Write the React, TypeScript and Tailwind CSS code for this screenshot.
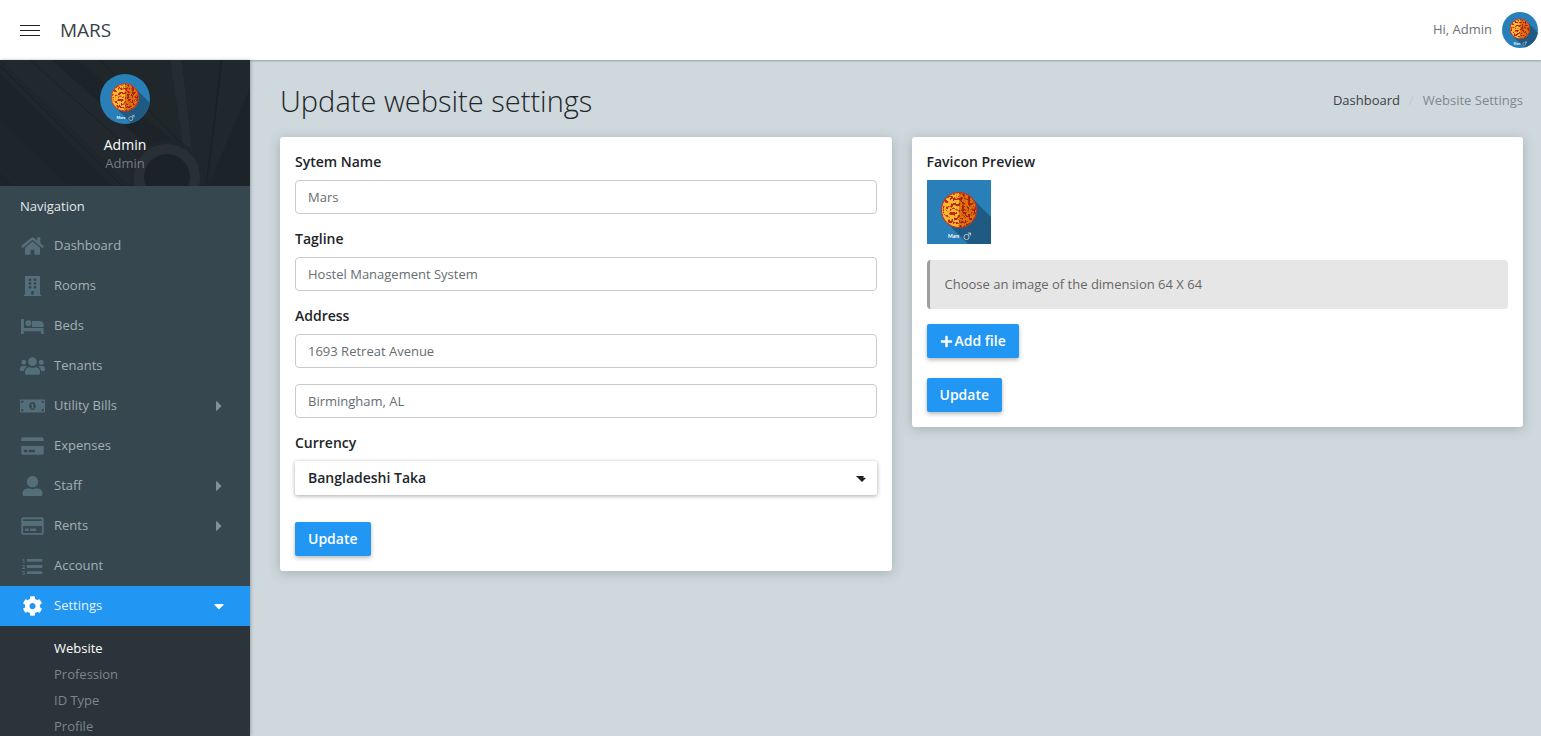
import { useId } from 'react';
import type { ComponentType, ReactNode } from 'react';
import {
  FaBuilding,
  FaCaretDown,
  FaCaretRight,
  FaCog,
  FaCreditCard,
  FaHome,
  FaPlus,
  FaRegCreditCard,
  FaUserAlt,
  FaUsers,
} from 'react-icons/fa';

type IconProps = { className?: string };
type NavItem = { icon: ComponentType<IconProps>; label: string; hasChildren?: boolean };

function BedIcon({ className }: IconProps) {
  return (
    <svg viewBox="0 0 25 20" fill="currentColor" className={className} aria-hidden="true">
      <path d="M1.6 3h1.7q.6 0 .6.6V12h19.2q.6 0 .6.6v4.8q0 .6-.6.6h-1.6q-.6 0-.6-.6V15.300H3.900v2.100q0 .6-.6.6H1.600q-.6 0-.6-.6V3.600q0-.6.6-.6Z" />
      <circle cx="8.4" cy="7.3" r="3" />
      <path d="M12.600 5h7q4.100 0 4.100 4v2H12V5.600q0-.6.6-.6Z" />
    </svg>
  );
}

function BillIcon({ className }: IconProps) {
  return (
    <svg viewBox="0 0 25 20" fill="currentColor" className={className} aria-hidden="true">
      <path
        fillRule="evenodd"
        d="M.8 3.500h23.400q.8 0 .8.8v11.400q0 .8-.8.8H.8q-.8 0-.8-.8V4.300q0-.8.8-.8ZM1.300 4.800v2.400q2.200 0 2.400-2.400Zm20 0q.2 2.400 2.400 2.400V4.800ZM1.300 12.800v2.400h2.400q-.2-2.400-2.400-2.400Zm22.400 0q-2.200 0-2.400 2.400h2.400ZM12.500 6C10.500 6 9.200 7.800 9.200 10s1.300 4 3.300 4 3.300-1.800 3.300-4-1.300-4-3.300-4Z"
      />
      <path d="M12 7.700h1.200v3.700h.8v1h-2.900v-1h.8V9.100h-.8v-.9Z" />
    </svg>
  );
}

function ListIcon({ className }: IconProps) {
  return (
    <svg viewBox="0 0 25 20" fill="currentColor" className={className} aria-hidden="true">
      <rect x="6.800" y="3" width="15.500" height="2.800" rx=".5" />
      <rect x="6.800" y="9.100" width="15.500" height="2.800" rx=".5" />
      <rect x="6.800" y="15.200" width="15.500" height="2.800" rx=".5" />
      <g fontSize="6" fontWeight="700" fontFamily="Open Sans, sans-serif">
        <text x="1.800" y="6.500">
          1
        </text>
        <text x="1.800" y="12.600">
          2
        </text>
        <text x="1.800" y="18.700">
          3
        </text>
      </g>
    </svg>
  );
}

const navItems: NavItem[] = [
  { icon: FaHome, label: 'Dashboard' },
  { icon: FaBuilding, label: 'Rooms' },
  { icon: BedIcon, label: 'Beds' },
  { icon: FaUsers, label: 'Tenants' },
  { icon: BillIcon, label: 'Utility Bills', hasChildren: true },
  { icon: FaCreditCard, label: 'Expenses' },
  { icon: FaUserAlt, label: 'Staff', hasChildren: true },
  { icon: FaRegCreditCard, label: 'Rents', hasChildren: true },
  { icon: ListIcon, label: 'Account' },
];

const settingsItems = ['Website', 'Profession', 'ID Type', 'Profile'];

function MarsLogo({ className }: { className: string }) {
  const id = useId();
  return (
    <svg viewBox="0 0 64 64" className={className} role="img" aria-label="Mars">
      <defs>
        <clipPath id={`${id}-planet`}>
          <circle cx="32" cy="30" r="17.5" />
        </clipPath>
        <filter id={`${id}-spots`} x="0" y="0" width="100%" height="100%" colorInterpolationFilters="sRGB">
          <feTurbulence type="fractalNoise" baseFrequency="0.34" numOctaves="2" seed="5" result="noise" />
          <feColorMatrix
            in="noise"
            type="matrix"
            values="0 0 0 0 0.72  0 0 0 0 0.16  0 0 0 0 0.08  10 0 0 0 -5"
          />
        </filter>
      </defs>
      <rect width="64" height="64" fill="#2980b9" />
      <path d="M44.5 17.5 64 37v27H41L19.5 42.5Z" fill="#1f5a83" />
      <circle cx="32" cy="30" r="18" fill="#c0392b" />
      <g clipPath={`url(#${id}-planet)`}>
        <rect x="14" y="12" width="18" height="36" fill="#fdb833" />
        <rect x="32" y="12" width="18" height="36" fill="#fb950f" />
        <rect x="14" y="12" width="36" height="36" filter={`url(#${id}-spots)`} />
        <rect x="32" y="12" width="18" height="36" fill="#7a0d08" opacity="0.25" />
      </g>
      <circle cx="32" cy="30" r="17.5" fill="none" stroke="#b8342a" />
      <text x="21" y="58" fontSize="5" fontWeight="700" fill="#fff" fontFamily="Lato, sans-serif">
        Mars
      </text>
      <g fill="none" stroke="#b9c0c4" strokeWidth="1">
        <circle cx="39.5" cy="57" r="2.6" />
        <path d="m41.4 55.1 2-2M41 53h2.6v2.6" />
      </g>
    </svg>
  );
}

function SidebarPattern() {
  return (
    <svg
      viewBox="0 0 250 126"
      preserveAspectRatio="xMidYMid slice"
      className="absolute inset-0 size-full"
      aria-hidden="true"
    >
      <rect width="250" height="126" fill="#1c2429" />
      <path d="M0 0h52l140 126H130Z" fill="#22292e" />
      <path d="M0 0v14l112 112h18Z" fill="#1f272c" />
      <path d="M0 60v52l14 14h56Z" fill="#1e262b" />
      <path d="M78 0h92l24 100Z" fill="#1f272b" />
      <path d="M170 0h12l14 126h-6Z" fill="#262d32" />
      <path d="M182 0h38l-12 126h-12Z" fill="#1e272b" />
      <path d="M222 0h28v28l-42 98Z" fill="#1f282c" />
      <g fill="none" stroke="#1a2126" strokeWidth="1">
        <path d="M0 6 122 126M30 0l142 126M100 0l96 98M222 0l-16 126" />
      </g>
      <circle cx="167" cy="117" r="37" fill="#20272c" />
      <circle cx="167" cy="117" r="33" fill="#293035" />
      <circle cx="167" cy="117" r="23" fill="#1b2328" />
    </svg>
  );
}

function Header() {
  return (
    <header className="relative z-10 flex h-15 shrink-0 items-center bg-white pr-[3px] pl-5 shadow-[0_1px_2px_rgba(60,80,80,0.4)]">
      <button type="button" aria-label="Toggle navigation" className="flex w-5 flex-col gap-1">
        <span className="h-px bg-[#212121]" />
        <span className="h-px bg-[#212121]" />
        <span className="h-px bg-[#212121]" />
      </button>
      <a href="#" className="ml-5 text-[19px] text-[#37424a]">
        MARS
      </a>
      <a href="#" className="ml-auto flex items-center gap-[10px] text-[#6b7278]">
        Hi, Admin
        <MarsLogo className="size-9 rounded-full" />
      </a>
    </header>
  );
}

function Sidebar() {
  return (
    <aside className="relative z-20 flex w-[250px] shrink-0 flex-col overflow-y-auto bg-[#37474f] shadow-[1px_0_3px_rgba(60,80,80,0.35)] [scrollbar-width:none]">
      <div className="relative h-[126px] shrink-0">
        <SidebarPattern />
        <div className="relative flex flex-col items-center pt-[14px]">
          <MarsLogo className="size-[50px] rounded-full" />
          <p className="mt-3 text-sm leading-[18px] text-white">Admin</p>
          <p className="leading-[18px] text-[#757d81]">Admin</p>
        </div>
      </div>

      <nav className="flex grow flex-col">
        <h2 className="px-5 leading-10 text-[#e4e8ea]">Navigation</h2>
        {navItems.map((item) => (
          <a
            key={item.label}
            href="#"
            className="flex h-10 shrink-0 items-center gap-[9px] pr-[23px] pl-5 text-[#a3b0b5] hover:text-white"
          >
            <item.icon className="h-5 w-[25px] shrink-0 text-[#546e7a]" />
            {item.label}
            {item.hasChildren && <FaCaretRight className="ml-auto size-4 text-[#7f9096]" />}
          </a>
        ))}
        <a
          href="#"
          className="flex h-10 shrink-0 items-center gap-[9px] bg-[#2196f3] pr-[23px] pl-5 text-[#e6f3fd]"
        >
          <FaCog className="h-5 w-[25px] shrink-0 text-white" />
          Settings
          <FaCaretDown className="ml-auto size-4 text-white" />
        </a>
        <ul className="grow bg-[#2a343a] pt-[9px]">
          {settingsItems.map((label) => (
            <li key={label}>
              <a
                href="#"
                className={
                  label === 'Website'
                    ? 'block pl-[54px] leading-[26px] text-white'
                    : 'block pl-[54px] leading-[26px] text-[#7d868a]'
                }
              >
                {label}
              </a>
            </li>
          ))}
        </ul>
      </nav>
    </aside>
  );
}

function Card({ children }: { children: ReactNode }) {
  return (
    <section className="flex-1 rounded-[3px] bg-white px-[15px] pt-4 pb-[15px] shadow-[0_2px_12px_rgba(70,90,80,0.3)]">
      {children}
    </section>
  );
}

function Field({ id, label, value }: { id: string; label: string; value: string }) {
  return (
    <div className="mb-4">
      <label htmlFor={id} className="mb-[9px] block text-sm leading-[18px] font-semibold text-[#212529]">
        {label}
      </label>
      <TextInput id={id} value={value} />
    </div>
  );
}

function TextInput({ id, value, ariaLabel }: { id: string; value: string; ariaLabel?: string }) {
  return (
    <input
      id={id}
      type="text"
      defaultValue={value}
      aria-label={ariaLabel}
      className="block h-[34px] w-full rounded border border-[#c8cacc] bg-white px-3 text-[#666d73] outline-none focus:border-[#2196f3]"
    />
  );
}

function Button({ children, type = 'button' }: { children: ReactNode; type?: 'button' | 'submit' }) {
  return (
    <button
      type={type}
      className="flex h-[34px] items-center gap-[2px] rounded-[2px] bg-[#2196f3] px-[13px] text-sm font-semibold text-white shadow-[0_2px_4px_rgba(0,0,0,0.28)]"
    >
      {children}
    </button>
  );
}

function SettingsForm() {
  return (
    <Card>
      <form onSubmit={(e) => e.preventDefault()}>
        <Field id="name" label="Sytem Name" value="Mars" />
        <Field id="tagline" label="Tagline" value="Hostel Management System" />
        <Field id="address" label="Address" value="1693 Retreat Avenue" />
        <div className="mb-4">
          <TextInput id="address2" value="Birmingham, AL" ariaLabel="Address line 2" />
        </div>
        <label htmlFor="currency" className="mb-[9px] block text-sm leading-[18px] font-semibold text-[#212529]">
          Currency
        </label>
        <div className="relative mb-[27px]">
          <select
            id="currency"
            className="block h-[34px] w-full appearance-none rounded-[2px] bg-white px-[13px] text-sm font-semibold text-[#212529] shadow-[0_1px_4px_rgba(0,0,0,0.35)] outline-none"
          >
            <option>Bangladeshi Taka</option>
          </select>
          <svg
            viewBox="0 0 10 6"
            className="pointer-events-none absolute top-[15px] right-[11px] h-[6px] w-[10px]"
            aria-hidden="true"
          >
            <path d="M0 0h8L7 1.5 10 2 6 6Z" fill="#212121" />
          </svg>
        </div>
        <Button type="submit">Update</Button>
      </form>
    </Card>
  );
}

function FaviconForm() {
  return (
    <Card>
      <h2 className="mb-[9px] text-sm leading-[18px] font-semibold text-[#212529]">Favicon Preview</h2>
      <MarsLogo className="size-16" />
      <p className="mt-4 mb-[15px] rounded border-l-[3px] border-[#9e9e9e] bg-[#e6e6e6] px-[15px] leading-[49px] text-[#666]">
        Choose an image of the dimension 64 X 64
      </p>
      <div className="flex flex-col items-start gap-5">
        <Button>
          <FaPlus className="size-[13px]" />
          Add file
        </Button>
        <Button type="submit">Update</Button>
      </div>
    </Card>
  );
}

export default function App() {
  return (
    <div className="flex h-screen flex-col bg-[#cfd8dd] font-['Open_Sans','Lato',sans-serif] text-[13px]">
      <Header />
      <div className="flex min-h-0 grow">
        <Sidebar />
        <main className="min-w-0 grow overflow-y-auto pt-6 pr-[18px] pb-6 pl-[30px]">
          <div className="mb-[19px] flex items-center justify-between">
            <h1 className="text-[29px] leading-[34px] font-light text-[#212529]">Update website settings</h1>
            <nav aria-label="Breadcrumb" className="flex">
              <a href="#" className="text-[#3c4246]">
                Dashboard
              </a>
              <span className="px-[9px] text-[#c3cbd0]">/</span>
              <span className="text-[#80888d]">Website Settings</span>
            </nav>
          </div>
          <div className="flex items-start gap-5">
            <SettingsForm />
            <FaviconForm />
          </div>
        </main>
      </div>
    </div>
  );
}
